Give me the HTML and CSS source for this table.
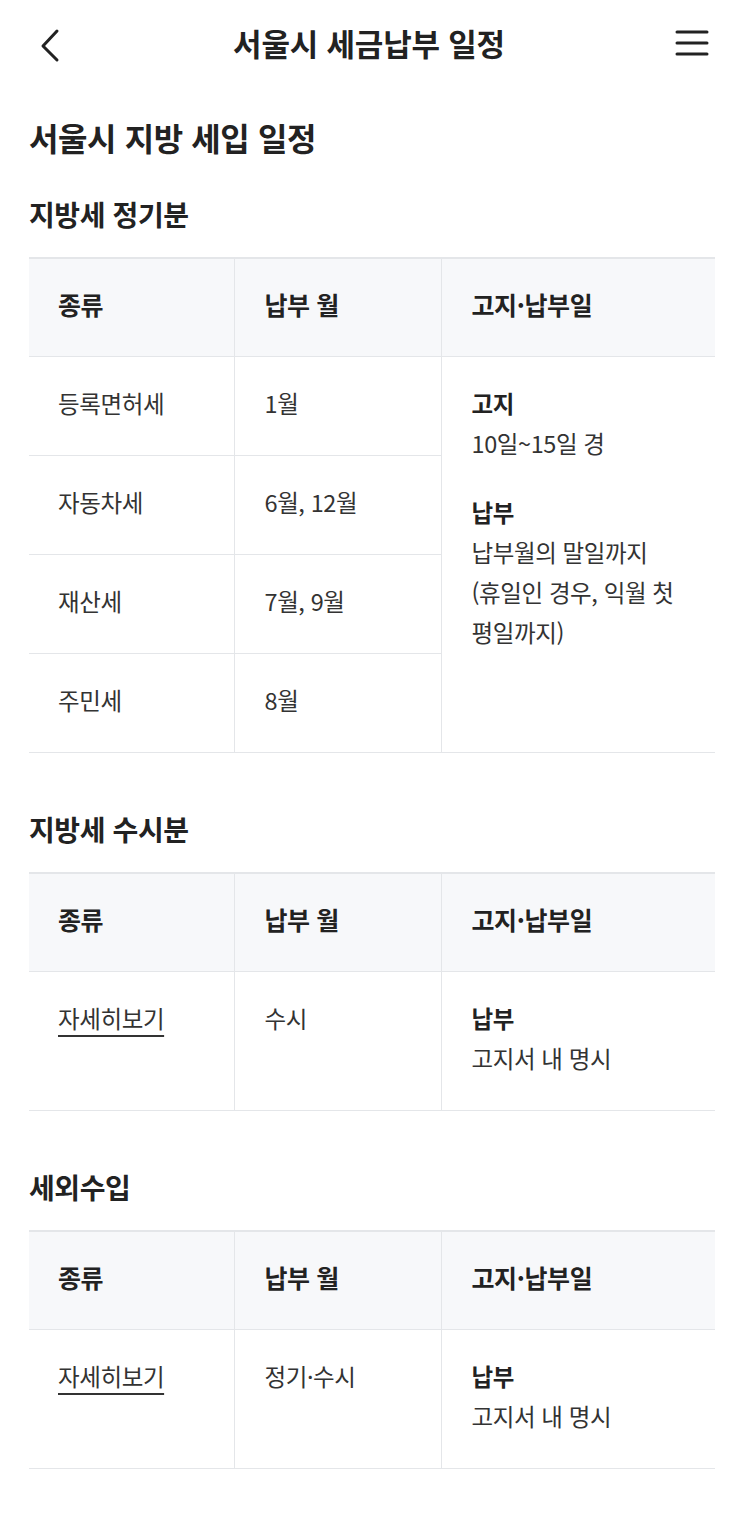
FILE: index.html
```html
<!DOCTYPE html>
<html lang="ko">
<head>
<meta charset="utf-8">
<title>서울시 세금납부 일정</title>
<link rel="stylesheet" href="styles.css">
</head>
<body>
<header class="topbar">
  <button class="icon-btn" aria-label="뒤로">
    <svg width="30" height="40" viewBox="0 0 30 40"><polyline points="21,8 7,23 21,37" fill="none" stroke="#222" stroke-width="3" stroke-linecap="round" stroke-linejoin="round"/></svg>
  </button>
  <h1 class="topbar-title">서울시 세금납부 일정</h1>
  <button class="icon-btn" aria-label="메뉴">
    <svg width="40" height="40" viewBox="0 0 40 40"><g stroke="#222" stroke-width="3" stroke-linecap="round"><line x1="5" y1="9" x2="35" y2="9"/><line x1="5" y1="20" x2="35" y2="20"/><line x1="5" y1="31" x2="35" y2="31"/></g></svg>
  </button>
</header>

<main class="content">
  <h2 class="page-title">서울시 지방 세입 일정</h2>

  <section class="section">
    <h3 class="section-title">지방세 정기분</h3>
    <table class="sched">
      <colgroup><col class="c1"><col class="c2"><col class="c3"></colgroup>
      <thead>
        <tr><th>종류</th><th>납부 월</th><th>고지·납부일</th></tr>
      </thead>
      <tbody>
        <tr><td>등록면허세</td><td>1월</td>
          <td rowspan="4" class="info">
            <div class="blk"><strong>고지</strong><span>10일~15일 경</span></div>
            <div class="blk"><strong>납부</strong><span>납부월의 말일까지<br>(휴일인 경우, 익월 첫<br>평일까지)</span></div>
          </td>
        </tr>
        <tr><td>자동차세</td><td>6월, 12월</td></tr>
        <tr><td>재산세</td><td>7월, 9월</td></tr>
        <tr><td>주민세</td><td>8월</td></tr>
      </tbody>
    </table>
  </section>

  <section class="section">
    <h3 class="section-title">지방세 수시분</h3>
    <table class="sched">
      <colgroup><col class="c1"><col class="c2"><col class="c3"></colgroup>
      <thead>
        <tr><th>종류</th><th>납부 월</th><th>고지·납부일</th></tr>
      </thead>
      <tbody>
        <tr><td><a href="#" class="more">자세히보기</a></td><td>수시</td>
          <td class="info"><div class="blk"><strong>납부</strong><span>고지서 내 명시</span></div></td>
        </tr>
      </tbody>
    </table>
  </section>

  <section class="section">
    <h3 class="section-title">세외수입</h3>
    <table class="sched">
      <colgroup><col class="c1"><col class="c2"><col class="c3"></colgroup>
      <thead>
        <tr><th>종류</th><th>납부 월</th><th>고지·납부일</th></tr>
      </thead>
      <tbody>
        <tr><td><a href="#" class="more">자세히보기</a></td><td>정기·수시</td>
          <td class="info"><div class="blk"><strong>납부</strong><span>고지서 내 명시</span></div></td>
        </tr>
      </tbody>
    </table>
  </section>
</main>
</body>
</html>
```

FILE: styles.css
```css
* { box-sizing: border-box; }
html, body { margin: 0; padding: 0; background: #fff; }
body {
  font-family: "Noto Sans CJK KR", "Noto Sans", sans-serif;
  color: #222;
}
.topbar {
  height: 86px;
  display: flex;
  align-items: center;
  justify-content: space-between;
  padding: 0 31px 0 36px;
}
.icon-btn {
  border: 0;
  background: none;
  padding: 0;
  display: flex;
  align-items: center;
}
.topbar-title {
  margin: 0;
  font-size: 31px;
  font-weight: 700;
  letter-spacing: -0.2px;
  color: #222;
  line-height: 44px;
}
.content { padding: 0 28px 60px 29px; }
.page-title {
  margin: 29px 0 0;
  font-size: 32px;
  line-height: 44px;
  font-weight: 700;
  letter-spacing: -0.4px;
  color: #222;
}
.section { margin-top: 58px; }
.page-title + .section { margin-top: 37px; }
.section-title {
  margin: 0 0 25px;
  font-size: 28px;
  line-height: 36px;
  font-weight: 700;
  letter-spacing: -0.4px;
  color: #222;
}
.sched {
  width: 686px;
  border-collapse: collapse;
  table-layout: fixed;
  border-top: 2px solid #e4e6e9;
}
.sched .c1 { width: 205px; }
.sched .c2 { width: 207px; }
.sched .c3 { width: 274px; }
.sched th, .sched td {
  text-align: left;
  vertical-align: top;
  padding: 26px 16px 32px 30px;
  line-height: 40px;
  border-bottom: 1px solid #e4e6e9;
  border-left: 1px solid #e4e6e9;
}
.sched th:first-child, .sched td:first-child { border-left: 0; padding-left: 29px; }
.sched th {
  background: #f7f8fa;
  font-size: 25px;
  font-weight: 700;
  letter-spacing: -0.4px;
  color: #222;
  padding-top: 25px;
  padding-bottom: 32px;
}
.sched td {
  font-size: 23.5px;
  font-weight: 400;
  letter-spacing: -0.4px;
  color: #333;
}
.info { line-height: 39.5px; }
.info .blk { display: flex; flex-direction: column; }
.info .blk + .blk { margin-top: 29px; }
.info strong { font-weight: 700; color: #222; }
.more {
  color: #333;
  text-decoration: underline;
  text-decoration-thickness: 1.5px;
  text-underline-offset: 7px;
}
```
